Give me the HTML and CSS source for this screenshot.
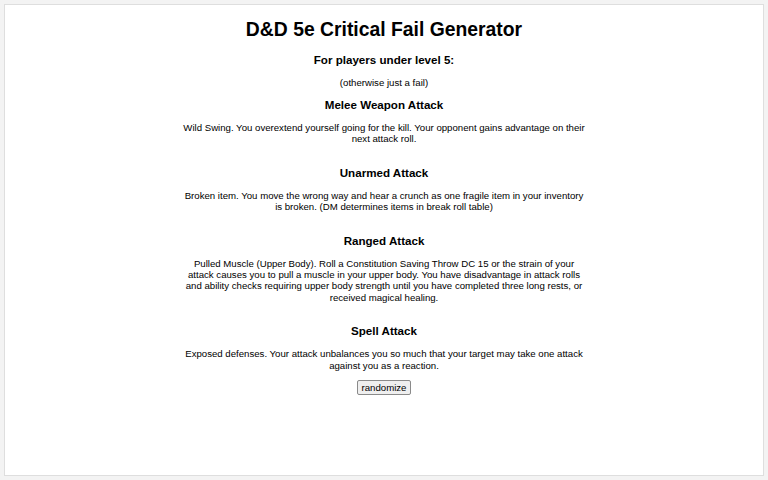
FILE: index.html
```html
<!DOCTYPE html>
<html>
<head>
<meta charset="utf-8">
<link rel="stylesheet" href="styles.css">
</head>
<body>
<div class="card">
  <h1 class="title">D&amp;D 5e Critical Fail Generator</h1>
  <div class="content">
    <h2 class="subtitle">For players under level 5:</h2>
    <p class="text">(otherwise just a fail)</p>
    <section class="attack">
      <h3 class="attack-title">Melee Weapon Attack</h3>
      <p class="text">Wild Swing. You overextend yourself going for the kill. Your opponent gains advantage on their next attack roll.</p>
    </section>
    <section class="attack">
      <h3 class="attack-title">Unarmed Attack</h3>
      <p class="text">Broken item. You move the wrong way and hear a crunch as one fragile item in your inventory is broken. (DM determines items in break roll table)</p>
    </section>
    <section class="attack">
      <h3 class="attack-title">Ranged Attack</h3>
      <p class="text">Pulled Muscle (Upper Body). Roll a Constitution Saving Throw DC 15 or the strain of your attack causes you to pull a muscle in your upper body. You have disadvantage in attack rolls and ability checks requiring upper body strength until you have completed three long rests, or received magical healing.</p>
    </section>
    <section class="attack">
      <h3 class="attack-title">Spell Attack</h3>
      <p class="text">Exposed defenses. Your attack unbalances you so much that your target may take one attack against you as a reaction.</p>
    </section>
    <button class="btn" type="button">randomize</button>
  </div>
</div>
</body>
</html>
```
FILE: styles.css
```css
html, body {
  margin: 0;
  padding: 0;
}
body {
  background: #f3f3f3;
  padding: 4px;
  font-family: "Liberation Sans", Arial, sans-serif;
  color: #000;
  box-sizing: border-box;
  height: 480px;
}
.card {
  background: #fff;
  border: 1px solid #dedede;
  height: 472px;
  box-sizing: border-box;
  display: flex;
  flex-direction: column;
  align-items: center;
  text-align: center;
}
.title {
  margin: 11.5px 0 0;
  font-size: 19.35px;
  line-height: 24px;
  font-weight: bold;
}
.content {
  width: 406px;
  display: flex;
  flex-direction: column;
  align-items: center;
  margin-top: 12px;
}
.subtitle {
  margin: 0 0 10px;
  font-size: 11.6px;
  line-height: 14px;
  font-weight: bold;
}
.text {
  margin: 0;
  font-size: 9.65px;
  line-height: 11.4px;
}
.attack {
  margin-top: 21px;
  display: flex;
  flex-direction: column;
  align-items: center;
}
.attack:first-of-type {
  margin-top: 10px;
}
.attack-title {
  margin: 0 0 10px;
  font-size: 11.6px;
  line-height: 14px;
  font-weight: bold;
}
.btn {
  margin-top: 9px;
  font-family: "Liberation Sans", Arial, sans-serif;
  font-size: 9.65px;
  line-height: 11px;
  padding: 1px 4px;
  background: #efefef;
  border: 1px solid #8a8a8a;
  border-radius: 2px;
  color: #000;
}
```
